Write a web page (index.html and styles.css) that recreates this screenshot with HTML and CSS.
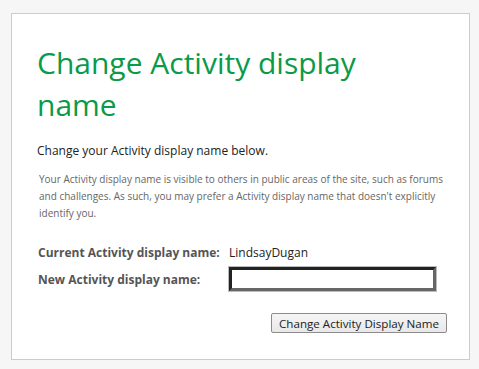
FILE: index.html
```html
<!DOCTYPE html>
<html lang="en">
<head>
    <meta charset="UTF-8">
    <meta name="viewport" content="width=device-width, initial-scale=1.0">
    <title>Change Activity display name</title>
    <link rel="stylesheet" href="styles.css">
</head>
<body>
    <!-- display name form -->
    <div class="panel">
        <h1>Change Activity display name</h1>
        <p class="intro">Change your Activity display name below.</p>
        <p class="note">Your Activity display name is visible to others in public areas of the site, such as forums and challenges. As such, you may prefer a Activity display name that doesn't explicitly identify you.</p>

        <div class="form">
            <div class="row">
                <span class="label">Current Activity display name:</span>
                <span class="value">LindsayDugan</span>
            </div>
            <div class="row">
                <span class="label label-new">New Activity display name:</span>
                <input type="text" class="name-input" autofocus>
            </div>
            <div class="actions">
                <button class="submit-btn">Change Activity Display Name</button>
            </div>
        </div>
    </div>
</body>
</html>
```

FILE: styles.css
```css
body {
    margin: 0;
    padding: 13px 9px 10px 11px;
    background-color: #f6f6f6;
    font-family: 'Open Sans', sans-serif;
}

.panel {
    height: 347px;
    box-sizing: border-box;
    background-color: #fff;
    border: 1px solid #cccccc;
    padding: 28px 22px 0 25px;
}

h1 {
    margin: 0;
    font-size: 30px;
    font-weight: normal;
    line-height: 42px;
    color: #0a9a48;  /* green heading */
    width: 340px;
}

.intro {
    margin: 16px 0 0 0;
    font-size: 12px;
    line-height: 17px;
    color: #222;
}

.note {
    margin: 12px 0 0 2px;
    font-size: 10px;
    line-height: 17px;
    color: #666;
}

.form {
    margin-top: 22px;
}

.row {
    display: flex;
    align-items: center;
    margin-left: 1px;
    line-height: 17px;
}

.row + .row {
    margin-top: 6px;
}

.label {
    width: 191px;
    font-size: 12px;
    font-weight: bold;
    color: #555;
}

.value {
    font-size: 12px;
    color: #222;
}

.name-input {
    width: 207px;
    height: 24px;
    box-sizing: border-box;
    border: 3px solid;
    border-color: #222 #666 #666 #222;
    box-shadow: 0 0 0 1px #bbb;
    padding: 0 4px;
    font-family: 'Open Sans', sans-serif;
    font-size: 12px;
    outline: none;
}

.actions {
    display: flex;
    justify-content: flex-end;
    margin-top: 22px;
}

.submit-btn {
    height: 20px;
    padding: 0 7px;
    font-family: 'Open Sans', sans-serif;
    font-size: 11.6px;
    color: #222;
    background: linear-gradient(#f5f5f5, #e8e8e8);
    border: 1px solid #8c8c8c;
    border-radius: 2px;
}
```
